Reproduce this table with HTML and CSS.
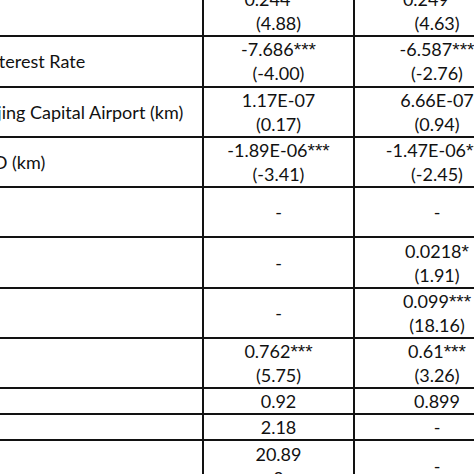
FILE: index.html
```html
<!DOCTYPE html>
<html>
<head>
<meta charset="utf-8">
<link rel="stylesheet" href="styles.css">
</head>
<body>
<table class="reg">
  <colgroup><col class="c-lab"><col class="c-m1"><col class="c-m2"></colgroup>
  <tbody>
    <tr class="dbl"><td class="lab"></td><td>0.244<span class="sig">***</span><br>(4.88)</td><td>0.249<span class="sig">***</span><br>(4.63)</td></tr>
    <tr class="dbl"><td class="lab lab-rate">Interest Rate</td><td>-7.686<span class="sig">***</span><br>(-4.00)</td><td>-6.587<span class="sig">***</span><br>(-2.76)</td></tr>
    <tr class="dbl"><td class="lab lab-air">Beijing Capital Airport (km)</td><td>1.17E-07<br>(0.17)</td><td>6.66E-07<br>(0.94)</td></tr>
    <tr class="dbl"><td class="lab lab-cbd">CBD (km)</td><td>-1.89E-06<span class="sig">***</span><br>(-3.41)</td><td>-1.47E-06<span class="sig">***</span><br>(-2.45)</td></tr>
    <tr class="dbl"><td class="lab"></td><td>-</td><td>-</td></tr>
    <tr class="dbl"><td class="lab"></td><td>-</td><td>0.0218<span class="sig">*</span><br>(1.91)</td></tr>
    <tr class="dbl"><td class="lab"></td><td>-</td><td>0.099<span class="sig">***</span><br>(18.16)</td></tr>
    <tr class="dbl"><td class="lab"></td><td>0.762<span class="sig">***</span><br>(5.75)</td><td>0.61<span class="sig">***</span><br>(3.26)</td></tr>
    <tr class="sgl"><td class="lab"></td><td>0.92</td><td>0.899</td></tr>
    <tr class="sgl"><td class="lab"></td><td>2.18</td><td>-</td></tr>
    <tr class="dbl"><td class="lab"></td><td>20.89<br>8</td><td>-</td></tr>
  </tbody>
</table>
</body>
</html>
```
FILE: styles.css
```css
html, body {
  margin: 0;
  padding: 0;
  background: #fff;
  overflow: hidden;
}
body {
  width: 474px;
  height: 474px;
}
.reg {
  border-collapse: collapse;
  table-layout: fixed;
  width: 520px;
  margin-top: -15px;
  font-family: Lato, "Liberation Sans", sans-serif;
  font-size: 18px;
  color: #111;
}
.c-lab { width: 203px; }
.c-m1 { width: 151px; }
.c-m2 { width: 166px; }
.reg td {
  border: 2px solid #121212;
  padding: 0;
  line-height: 24px;
  height: 23.5px;
  text-align: center;
  vertical-align: middle;
  white-space: nowrap;
}
.reg tr.dbl td {
  height: 48.3px;
}
.reg td.lab {
  border-left: none;
  text-align: left;
}
.sig {
  font-family: "Liberation Sans", sans-serif;
  font-size: 19px;
  line-height: 0;
  letter-spacing: 0;
}
.lab-rate { text-indent: -16px; }
.lab-air { text-indent: -28px; }
.lab-cbd { text-indent: -30px; }
```
